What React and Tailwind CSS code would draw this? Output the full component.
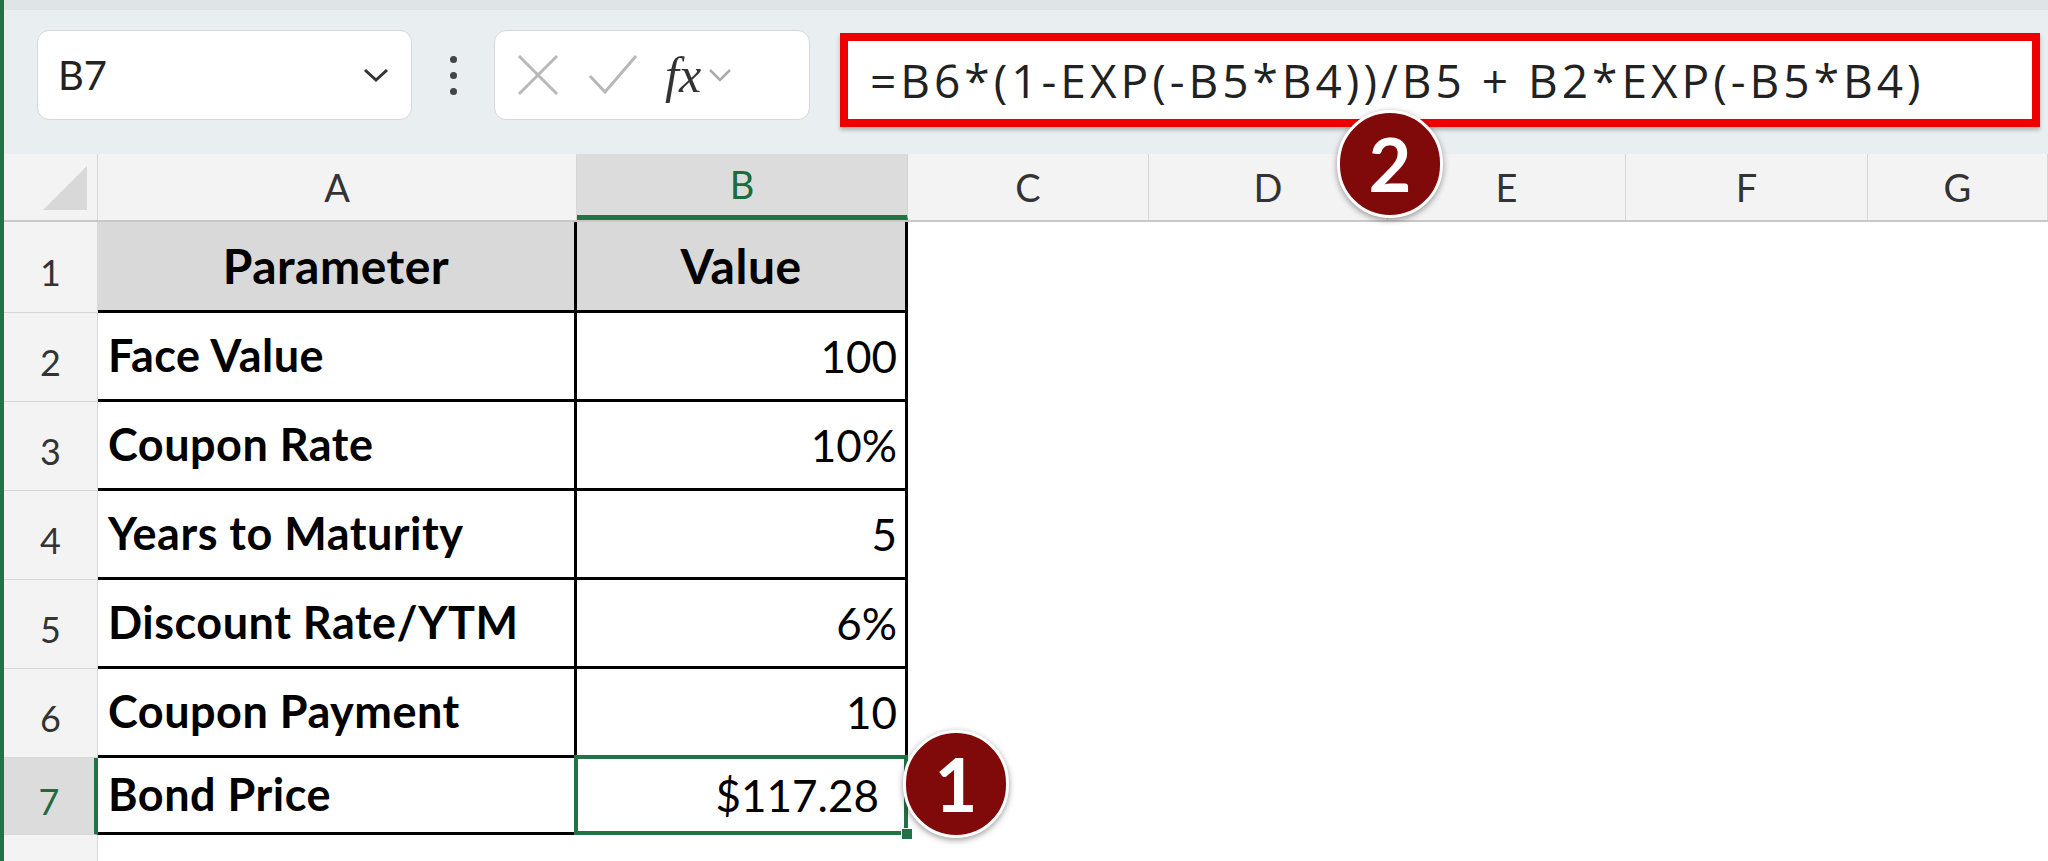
import React from "react";

const cols = [
  { l: "A", w: 479 }, { l: "B", w: 331 }, { l: "C", w: 241 }, { l: "D", w: 239 },
  { l: "E", w: 238 }, { l: "F", w: 242 }, { l: "G", w: 180 },
];
const rows = [
  ["Face Value", "100"],
  ["Coupon Rate", "10%"],
  ["Years to Maturity", "5"],
  ["Discount Rate/YTM", "6%"],
  ["Coupon Payment", "10"],
  ["Bond Price", "$117.28"],
];
const F = { fontFamily: "Lato, 'Open Sans', sans-serif" };

function Badge({ n, cls }) {
  return (
    <div className={"absolute w-[106px] h-[108px] rounded-full bg-[#800a0a] border-[3px] border-white shadow-[0_2px_6px_rgba(0,0,0,0.4)] flex items-center justify-center text-white text-[74px] font-bold leading-none " + cls} style={F}>
      {n}
    </div>
  );
}

export default function App() {
  return (
    <div className="relative w-[2048px] h-[861px] overflow-hidden bg-white border-l-4 border-[#217346]" style={F}>
      {/* toolbar */}
      <div className="h-[154px] bg-[#e9eef0] border-t-[10px] border-[#dfe4e6] flex items-start pt-[20px] pl-[33px]">
        <div className="w-[375px] h-[90px] bg-white rounded-[12px] border border-[#d4d8da] flex items-center px-[20px] justify-between">
          <span className="text-[40px] text-[#222]">B7</span>
          <svg width="30" height="20" viewBox="0 0 30 20"><path d="M4 5 L15 15 L26 5" fill="none" stroke="#333" strokeWidth="3" /></svg>
        </div>
        <div className="w-[82px] h-[90px] flex flex-col items-center justify-center gap-[9px]">
          <div className="w-[7px] h-[7px] rounded-full bg-[#444]" />
          <div className="w-[7px] h-[7px] rounded-full bg-[#444]" />
          <div className="w-[7px] h-[7px] rounded-full bg-[#444]" />
        </div>
        <div className="w-[316px] h-[90px] bg-white rounded-[12px] border border-[#d4d8da] flex items-center px-[20px] gap-[26px]">
          <svg width="46" height="46" viewBox="0 0 46 46"><path d="M4 4 L42 42 M42 4 L4 42" stroke="#b8b8b8" strokeWidth="3" /></svg>
          <svg width="52" height="46" viewBox="0 0 52 46"><path d="M3 24 L18 40 L49 4" fill="none" stroke="#b8b8b8" strokeWidth="3" /></svg>
          <span className="text-[50px] italic text-[#333] leading-none" style={{ fontFamily: "'Liberation Serif', serif" }}>fx</span>
          <svg width="26" height="18" viewBox="0 0 26 18" className="-ml-[20px]"><path d="M3 4 L13 14 L23 4" fill="none" stroke="#aaa" strokeWidth="2.5" /></svg>
        </div>
        <div className="ml-[30px] mt-[3px] w-[1200px] h-[94px] bg-white border-[8px] border-[#ee0000] flex items-center pl-[22px] shadow-[0_3px_4px_rgba(0,0,0,0.25)] overflow-hidden">
          <span className="text-[46px] text-[#222] whitespace-pre tracking-[4px]" style={{ fontFamily: "'Open Sans', sans-serif" }}>=B6*(1-EXP(-B5*B4))/B5 + B2*EXP(-B5*B4)</span>
        </div>
      </div>

      {/* grid */}
      <div className="flex h-[68px] bg-[#f3f3f3] border-b-2 border-[#c8c8c8]">
        <div className="w-[94px] flex items-end justify-end pr-[10px] pb-[10px] border-r border-[#d6d6d6]">
          <svg width="44" height="44" viewBox="0 0 44 44"><path d="M44 0 L44 44 L0 44 Z" fill="#d8d8d8" /></svg>
        </div>
        {cols.map((c) => (
          <div key={c.l} style={{ width: c.w }} className={"flex items-center justify-center text-[38px] border-r border-[#d6d6d6] " + (c.l === "B" ? "bg-[#dcdcdc] text-[#1d6a3d] border-b-[5px] border-b-[#217346]" : "text-[#333]")}>
            {c.l}
          </div>
        ))}
      </div>
      {/* row 1 */}
      <div className="flex h-[91px]">
        <div className="w-[94px] bg-[#f3f3f3] border-r border-[#d6d6d6] border-b border-b-[#d6d6d6] flex items-center justify-center text-[36px] text-[#333] pt-[10px]">1</div>
        <div className="w-[479px] bg-[#d9d9d9] border-r-[3px] border-b-[3px] border-black flex items-center justify-center text-[48px] font-bold text-black tracking-[0.5px]">Parameter</div>
        <div className="w-[331px] bg-[#d9d9d9] border-r-[3px] border-b-[3px] border-black flex items-center justify-center text-[48px] font-bold text-black tracking-[0.5px]">Value</div>
      </div>
      {rows.map(([p, v], i) => {
        const sel = i === 5;
        return (
          <div key={p} className={"flex " + (sel ? "h-[77px]" : "h-[89px]")}>
            <div className={"w-[94px] border-r border-[#d6d6d6] border-b border-b-[#d6d6d6] flex items-center justify-center text-[36px] pt-[10px] " + (sel ? "bg-[#dcdcdc] text-[#1d6a3d] border-r-[4px] border-r-[#217346]" : "bg-[#f3f3f3] text-[#333]")}>{i + 2}</div>
            <div className="w-[479px] border-r-[3px] border-b-[3px] border-black flex items-center pl-[10px] text-[45px] font-bold text-black tracking-[0.5px]">{p}</div>
            <div className={"relative w-[331px] border-r-[3px] border-b-[3px] border-black flex items-center justify-end text-[44px] text-black " + (sel ? "pr-[26px]" : "pr-[8px]")}>
              {v}
              {sel && <div className="absolute -left-[3px] -top-[3px] -right-[3px] -bottom-[3px] border-[4px] border-[#217346]" />}
              {sel && <div className="absolute -right-[8px] -bottom-[8px] w-[12px] h-[12px] bg-[#217346] border border-white" />}
            </div>
          </div>
        );
      })}
      <div className="flex h-[40px]">
        <div className="w-[94px] bg-[#f3f3f3] border-r border-[#d6d6d6]" />
      </div>

      <Badge n="2" cls="left-[1333px] top-[110px]" />
      <Badge n="1" cls="left-[899px] top-[730px]" />
    </div>
  );
}
